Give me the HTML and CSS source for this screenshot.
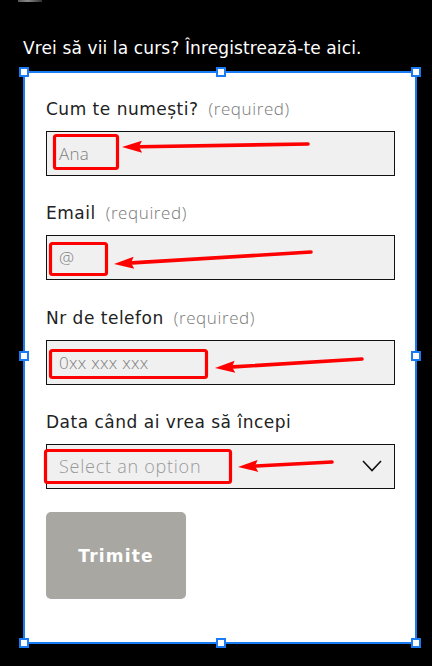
FILE: index.html
```html
<!DOCTYPE html>
<html lang="ro">
<head>
<meta charset="utf-8">
<title>Înregistrare curs</title>
<link rel="stylesheet" href="styles.css">
</head>
<body>
<div class="page">
  <div class="top-strip"><span class="top-mark"></span></div>
  <h2 class="heading">Vrei să vii la curs? Înregistrează-te aici.</h2>
  <div class="frame">
    <span class="handle h-tl"></span><span class="handle h-tc"></span><span class="handle h-tr"></span>
    <span class="handle h-ml"></span><span class="handle h-mr"></span>
    <span class="handle h-bl"></span><span class="handle h-bc"></span><span class="handle h-br"></span>
    <form class="form">
      <div class="field">
        <label class="label">Cum te numești?<span class="req">(required)</span></label>
        <div class="input"><span class="ph">Ana</span></div>
      </div>
      <div class="field">
        <label class="label">Email<span class="req">(required)</span></label>
        <div class="input"><span class="ph">@</span></div>
      </div>
      <div class="field">
        <label class="label">Nr de telefon<span class="req">(required)</span></label>
        <div class="input"><span class="ph">0xx xxx xxx</span></div>
      </div>
      <div class="field">
        <label class="label">Data când ai vrea să începi</label>
        <div class="input select"><span class="ph ph-select">Select an option</span>
          <svg class="chev" width="20" height="12" viewBox="0 0 20 12"><polyline points="1,1 10,10.5 19,1" fill="none" stroke="#111" stroke-width="1.6"/></svg>
        </div>
      </div>
      <div class="btn-row"><button type="button" class="btn">Trimite</button></div>
    </form>
  </div>
</div>
<svg class="annot" width="432" height="666" viewBox="0 0 432 666">
  <g fill="none" stroke="#f00" stroke-width="3.2" stroke-linejoin="round">
    <rect x="54.5" y="135.5" width="63" height="33" rx="2"/>
    <rect x="50.5" y="243.5" width="56" height="31" rx="2"/>
    <rect x="50.5" y="350.5" width="156" height="27" rx="2"/>
    <rect x="45.5" y="450.5" width="185" height="32" rx="2"/>
  </g>
  <g stroke="#f00" stroke-width="3.6" stroke-linecap="round">
    <line x1="140" y1="146.7" x2="308" y2="144"/>
    <line x1="132" y1="262.9" x2="311" y2="252"/>
    <line x1="233" y1="366.9" x2="362" y2="359"/>
    <line x1="256" y1="466" x2="332" y2="462"/>
  </g>
  <g fill="#f00">
    <polygon points="122,147 142.1,152.7 139,146.7 141.9,140.7"/>
    <polygon points="114,264 134.3,268.8 131,262.9 133.6,256.8"/>
    <polygon points="215,368 235.3,372.8 232,366.9 234.6,360.8"/>
    <polygon points="238,467 258.3,471.9 255,466 257.6,460"/>
  </g>
</svg>
</body>
</html>
```
FILE: styles.css
```css
* { box-sizing: border-box; }
html, body { margin: 0; padding: 0; background: #000; }
body { font-family: "DejaVu Sans", "Liberation Sans", sans-serif; width: 432px; height: 666px; overflow: hidden; position: relative; }
.page { display: flex; flex-direction: column; }
.top-strip { height: 3px; display: flex; }
.top-mark { display: block; width: 24px; height: 2px; margin-left: 18px; background: linear-gradient(90deg, #555, #888 40%, #333); }
.heading { margin: 33px 0 11px 23px; height: 24px; font-weight: 400; font-size: 17px; line-height: 24px; color: #fff; letter-spacing: 0.12px; white-space: nowrap; }
.frame { position: relative; margin-left: 23px; width: 394px; height: 573px; border: 2px solid #1a7cf5; background: #fff; padding: 24px 20px 0 21px; }
.handle { position: absolute; width: 10px; height: 10px; background: #fff; border: 2px solid #1a7cf5; }
.h-tl { left: -6px; top: -6px; }
.h-tc { left: 191px; top: -6px; }
.h-tr { right: -6px; top: -6px; }
.h-ml { left: -6px; top: 278px; }
.h-mr { right: -6px; top: 278px; }
.h-bl { left: -6px; bottom: -6px; }
.h-bc { left: 191px; bottom: -6px; }
.h-br { right: -6px; bottom: -6px; }
.form { display: flex; flex-direction: column; gap: 25.3px; }
.field { display: flex; flex-direction: column; }
.label { display: block; height: 24px; font-size: 17px; line-height: 24px; color: #222; margin-bottom: 10px; letter-spacing: 0.5px; white-space: nowrap; }
.req { margin-left: 10px; color: #777; font-family: "Open Sans", sans-serif; font-weight: 300; font-size: 17px; line-height: 24px; letter-spacing: 0.6px; }
.input { height: 45px; width: 349px; border: 1px solid #111; background: #f0f0f0; display: flex; align-items: center; padding: 0 12px; }
.ph { font-family: "Open Sans", sans-serif; font-size: 17px; font-weight: 300; color: #808080; letter-spacing: 0.3px; }
.select { justify-content: space-between; padding-right: 12px; }
.ph-select { font-size: 18px; color: #999; letter-spacing: 0.75px; }
.chev { display: block; }
.btn-row { display: flex; margin-top: -2px; }
.btn { width: 140px; height: 87px; border: none; border-radius: 5px; background: #a8a7a2; color: #fff; font-family: "DejaVu Sans", sans-serif; font-weight: 700; font-size: 17px; letter-spacing: 1.2px; padding: 0; }
.annot { position: absolute; left: 0; top: 0; pointer-events: none; }
```
